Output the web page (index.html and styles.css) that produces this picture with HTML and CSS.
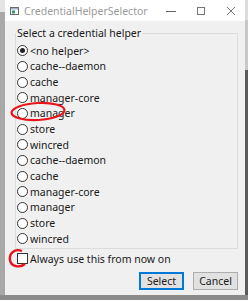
FILE: index.html
```html
<!DOCTYPE html>
<html lang="en">
<head>
  <meta charset="UTF-8" />
  <title>CredentialHelperSelector</title>
  <link rel="stylesheet" href="styles.css">
</head>
<body>
  <div class="screen">
    <div class="edge-left"></div>
    <div class="window">
      <div class="titlebar">
        <svg class="app-icon" width="9" height="8" viewBox="0 0 9 8">
          <rect x="0.5" y="0.5" width="8" height="7" fill="#fff" stroke="#6a6a6a"/>
          <rect x="1" y="1" width="7" height="1.5" fill="#9cb4cc"/>
          <rect x="2" y="3.5" width="3" height="3" fill="#2f9a6a"/>
        </svg>
        <span class="title">CredentialHelperSelector</span>
        <div class="caption-buttons">
          <svg width="10" height="10" viewBox="0 0 10 10"><path d="M0 5.5h10" stroke="#666"/></svg>
          <svg width="10" height="10" viewBox="0 0 10 10"><rect x="1.5" y="1.5" width="7" height="7" fill="none" stroke="#777"/></svg>
          <svg width="10" height="10" viewBox="0 0 10 10"><path d="M1 1l8 8M9 1l-8 8" stroke="#777"/></svg>
        </div>
      </div>

      <div class="content">
        <fieldset class="group">
          <legend>Select a credential helper</legend>
          <ul class="helpers" id="helpers"></ul>
        </fieldset>

        <label class="always">
          <span class="check"></span>
          Always use this from now on
        </label>

        <div class="actions">
          <button class="btn default">Select</button>
          <button class="btn">Cancel</button>
        </div>
      </div>

      <svg class="marks" width="240" height="295" viewBox="0 0 240 295">
        <ellipse cx="33" cy="111.5" rx="26.5" ry="8.5" transform="rotate(-3 33 111.5)" fill="none" stroke="#e8131b" stroke-width="2.2"/>
        <path d="M17 251 C9 248, 4 254, 5 260 C6 267, 15 268, 20 264" fill="none" stroke="#e8131b" stroke-width="2.4"/>
      </svg>
    </div>
    <div class="edge-right"></div>
  </div>
  <div class="edge-bottom"></div>

  <script>
    const helpers = ["<no helper>", "cache--daemon", "cache", "manager-core", "manager", "store", "wincred",
      "cache--daemon", "cache", "manager-core", "manager", "store", "wincred"];
    const list = document.getElementById("helpers");
    helpers.forEach((name, i) => {
      const li = document.createElement("li");
      li.className = "helper" + (i === 0 ? " checked" : "");
      const dot = document.createElement("span");
      dot.className = "radio";
      const text = document.createElement("span");
      text.textContent = name;
      li.appendChild(dot);
      li.appendChild(text);
      list.appendChild(li);
    });
  </script>
</body>
</html>
```

FILE: styles.css
```css
body {
  margin: 0;
  background: #8e8e8e;
  font-family: "Noto Sans", "DejaVu Sans", sans-serif;
  font-size: 10.5px;
  color: #1a1a1a;
  overflow: hidden;
}
.screen {
  display: flex;
}
.edge-left {
  width: 5px;
  background: linear-gradient(#e4e4e4 0 12px, #a8a8a8 12px);
}
.edge-right {
  width: 3px;
  background: linear-gradient(#dcdcdc 0 20px, #c8c8c8 20px 70px, #5a5a5a 70px);
}
.edge-bottom {
  height: 5px;
  background: #8a8a8a;
}
.window {
  position: relative;
  width: 240px;
  height: 295px;
  background: #f0f0f0;
  display: flex;
  flex-direction: column;
}
.titlebar {
  height: 21px;
  flex-shrink: 0;
  background: #fff;
  display: flex;
  align-items: center;
  padding-left: 5px;
}
.app-icon {
  margin-right: 5px;
}
.title {
  color: #9a9a9a;
}
.caption-buttons {
  margin-left: auto;
  display: flex;
  gap: 20px;
  padding-right: 9px;
}
.content {
  flex: 1;
  padding: 5px 7px 0 10px;
}
.group {
  margin: 0;
  padding: 2px 0 3px 0;
  border: 1px solid #dcdcdc;
  height: 223px;
  box-sizing: border-box;
}
.group legend {
  padding: 0 1px;
  line-height: 15px;
}
.helpers {
  list-style: none;
  margin: 0;
  padding: 0 0 0 1px;
}
.helper {
  height: 15.67px;
  display: flex;
  align-items: center;
  gap: 2px;
}
.radio {
  width: 9px;
  height: 9px;
  border: 1px solid #333;
  border-radius: 50%;
  background: #fff;
  display: flex;
  align-items: center;
  justify-content: center;
}
.helper.checked .radio::after {
  content: "";
  width: 5px;
  height: 5px;
  border-radius: 50%;
  background: #222;
}
.always {
  display: flex;
  align-items: center;
  gap: 2px;
  height: 15px;
  margin: 2px 0 0 2px;
}
.check {
  width: 9px;
  height: 9px;
  border: 1px solid #333;
  background: #fff;
}
.actions {
  display: flex;
  justify-content: flex-end;
  gap: 9px;
  margin-top: 6px;
}
.btn {
  width: 45px;
  height: 18px;
  padding: 0;
  background: #e1e1e1;
  border: 1px solid #adadad;
  font-family: inherit;
  font-size: 10.5px;
  color: #1a1a1a;
}
.btn.default {
  border: 1px solid #0078d7;
  box-shadow: inset 0 0 0 1px #0078d7;
}
.marks {
  position: absolute;
  left: 0;
  top: 0;
  pointer-events: none;
}
```
